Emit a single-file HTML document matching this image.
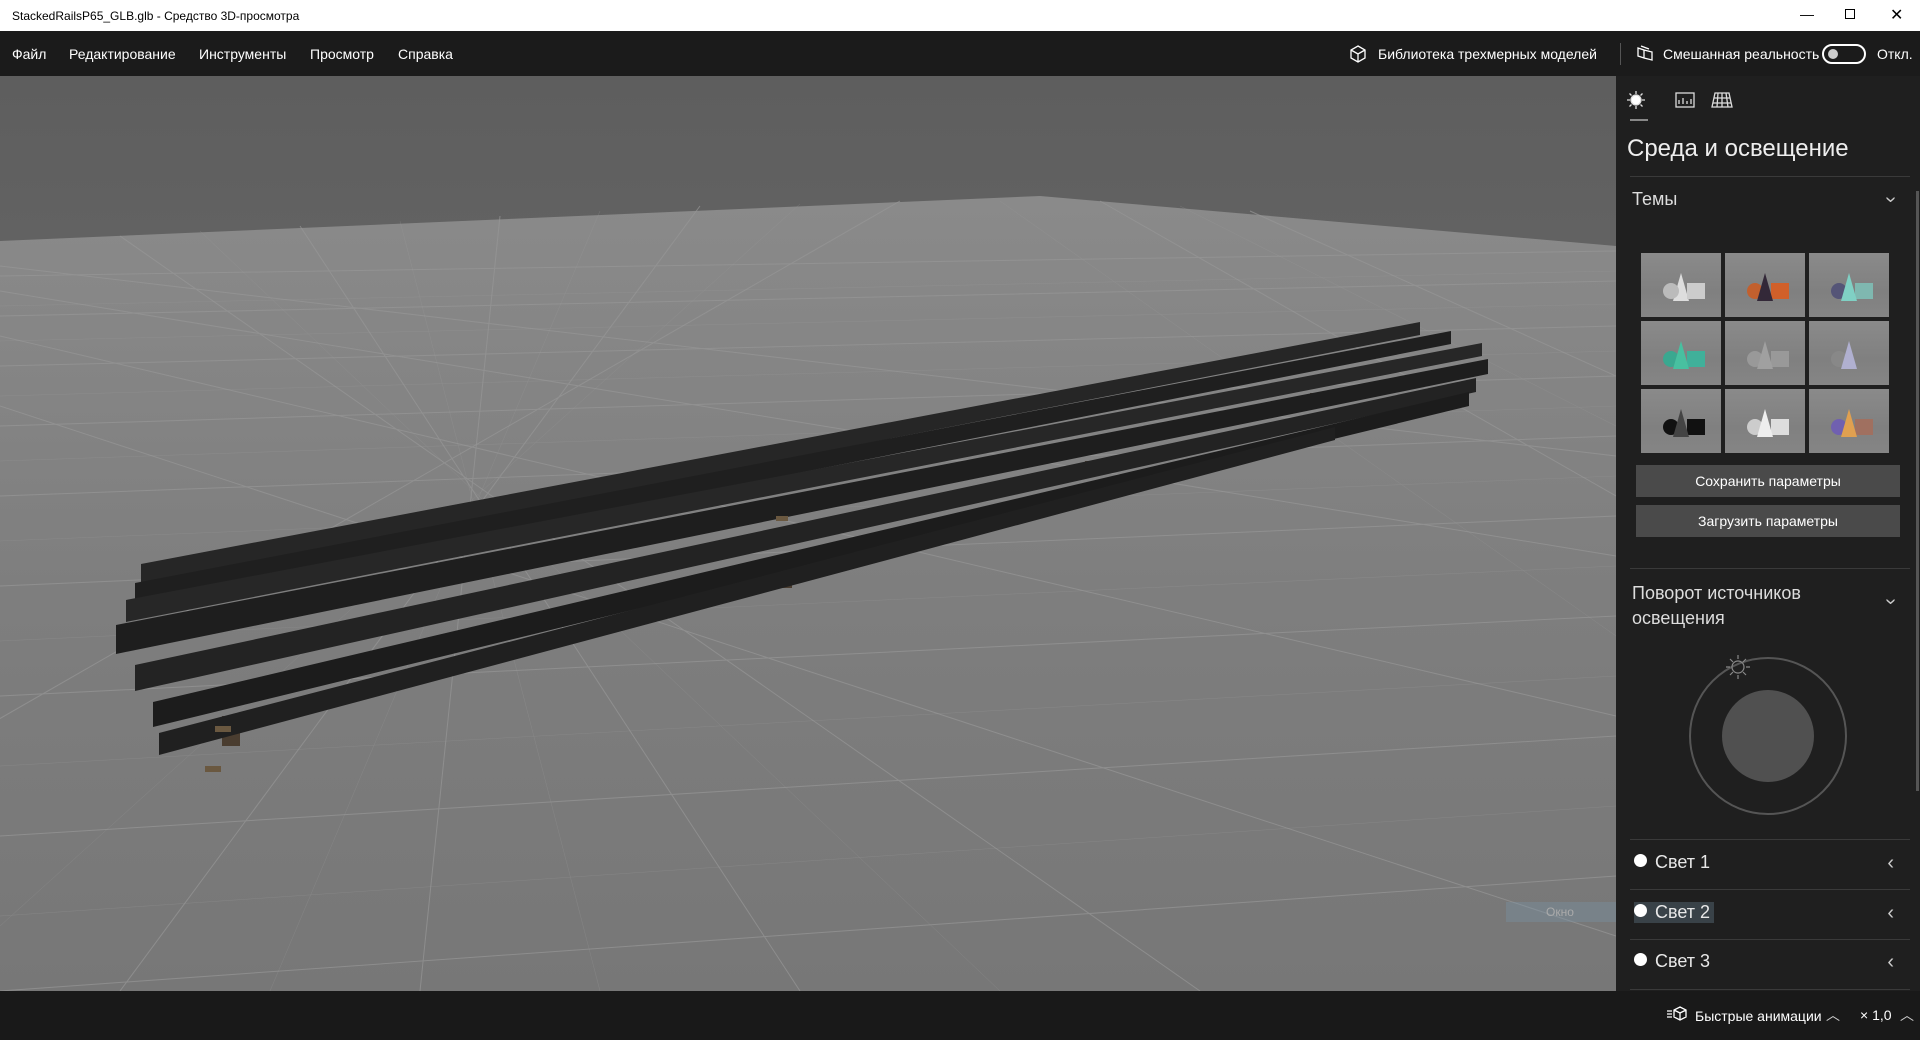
<!DOCTYPE html>
<html><head><meta charset="utf-8"><style>
*{margin:0;padding:0;box-sizing:border-box}
body{width:1920px;height:1040px;overflow:hidden;background:#1f1f1f;font-family:"Liberation Sans","Noto Sans CJK SC",sans-serif;position:relative;color:#fff}
.abs{position:absolute}
#title{left:0;top:0;width:1920px;height:31px;background:#fff;color:#000;font-size:12px}
#menu{left:0;top:31px;width:1920px;height:45px;background:#1b1b1b;font-size:14px}
#view{left:0;top:76px;width:1616px;height:915px;overflow:hidden}
#panel{left:1616px;top:76px;width:304px;height:915px;background:#1f1f1f}
#bottom{left:0;top:991px;width:1920px;height:49px;background:#191919;font-size:14px}
.thumb{position:absolute;width:80px;height:64px;background:linear-gradient(#8a8a8a,#808080 60%,#858585)}
.btn{position:absolute;left:20px;width:264px;height:32px;background:#4a4a4a;font-size:14px;text-align:center;line-height:32px}
.div{position:absolute;left:14px;width:280px;height:1px;background:#3a3a3a}
.row{position:absolute;left:18px;font-size:18px;color:#e8e8e8}
.row i{display:inline-block;width:13px;height:13px;border-radius:50%;background:#fff;margin-right:8px;vertical-align:1px}
.chev{position:absolute;right:26px;color:#ccc;font-size:20px}
</style></head><body>
<div id="title" class="abs"><span class="abs" style="left:12px;top:9px">StackedRailsP65_GLB.glb - Средство 3D-просмотра</span>
<span class="abs" style="left:1800px;top:6px;font-size:14px">—</span>
<span class="abs" style="left:1845px;top:9px;width:10px;height:10px;border:1px solid #000"></span>
<span class="abs" style="left:1890px;top:5px;font-size:16px">✕</span></div>
<div id="menu" class="abs">
<span class="abs" style="left:12px;top:15px">Файл</span>
<span class="abs" style="left:69px;top:15px">Редактирование</span>
<span class="abs" style="left:199px;top:15px">Инструменты</span>
<span class="abs" style="left:310px;top:15px">Просмотр</span>
<span class="abs" style="left:398px;top:15px">Справка</span>
<svg class="abs" style="left:1348px;top:13px" width="20" height="20" viewBox="0 0 20 20" fill="none" stroke="#fff" stroke-width="1.3"><path d="M10 2l7 4v8l-7 4-7-4V6z M3 6l7 4 7-4 M10 10v8"/></svg>
<span class="abs" style="left:1378px;top:15px">Библиотека трехмерных моделей</span>
<div class="abs" style="left:1620px;top:12px;width:1px;height:22px;background:#555"></div>
<svg class="abs" style="left:1635px;top:13px" width="20" height="20" viewBox="0 0 20 20" fill="none" stroke="#fff" stroke-width="1.3"><path d="M3 4l6 2v8l-6-2z M9 6l8 2v8l-8-2 M6 2l8 3"/></svg>
<span class="abs" style="left:1663px;top:15px">Смешанная реальность</span>
<div class="abs" style="left:1822px;top:13px;width:44px;height:20px;border:2px solid #fff;border-radius:10px"><div class="abs" style="left:4px;top:3px;width:10px;height:10px;border-radius:50%;background:#ccc"></div></div>
<span class="abs" style="left:1877px;top:15px">Откл.</span>
</div>
<div id="view" class="abs">
<svg width="1616" height="915" viewBox="0 0 1616 915">
<defs><linearGradient id="sky" x1="0" y1="0" x2="0" y2="1"><stop offset="0" stop-color="#5e5e5e"/><stop offset="1" stop-color="#747474"/></linearGradient>
<linearGradient id="fl" x1="0" y1="0" x2="0" y2="1"><stop offset="0" stop-color="#8a8a8a"/><stop offset="0.5" stop-color="#7e7e7e"/><stop offset="1" stop-color="#777"/></linearGradient></defs>
<rect width="1616" height="915" fill="url(#sky)"/>
<polygon points="0,165 1040,120 1616,170 1616,915 0,915" fill="url(#fl)"/>
<g stroke="#979797" stroke-width="1" opacity="0.7">
<path d="M0,200 L1616,175 M0,240 L1616,205 M0,290 L1616,250 M0,350 L1616,300 M0,420 L1616,360 M0,510 L1616,440 M0,620 L1616,540 M0,760 L1616,660 M0,915 L1616,800"/>
<path d="M0,190 L1616,380 M0,215 L1616,480 M0,260 L1616,640 M0,330 L1616,860 M120,160 L1200,915 M300,150 L800,915 M500,140 L420,915 M700,130 L120,915 M900,125 L-100,700 M1100,125 L1616,420 M1250,135 L1616,300"/>
</g>
<g stroke="#9e9e9e" stroke-width="0.5" opacity="0.35">
<path d="M0,230 L1616,195 M0,265 L1616,228 M0,320 L1616,275 M0,385 L1616,330 M0,465 L1616,400 M0,565 L1616,490 M0,690 L1616,600 M0,840 L1616,730"/>
<path d="M200,155 L1000,915 M400,145 L600,915 M600,135 L270,915 M800,128 L0,850 M1000,125 L1616,560 M1180,130 L1616,350"/>
</g>
<g>
<rect x="222" y="640" width="18" height="30" fill="#4a3d30"/>
<rect x="780" y="500" width="12" height="12" fill="#4a3d30"/>
<rect x="1085" y="385" width="12" height="10" fill="#4a3d30"/>
<rect x="1310" y="317" width="14" height="10" fill="#4a3d30"/>
<polygon points="141,488 1420,246 1420,259 141,509" fill="#262626"/>
<polygon points="135,507 1451,255 1451,268 135,528" fill="#1f1f1f"/>
<polygon points="126,524 1482,267 1482,280 126,546" fill="#272727"/>
<polygon points="116,549 1488,283 1488,298 116,578" fill="#1e1e1e"/>
<polygon points="135,589 1476,302 1476,316 135,615" fill="#232323"/>
<polygon points="153,626 1469,316 1469,330 153,651" fill="#1c1c1c"/>
<polygon points="159,657 1335,351 1335,364 159,679" fill="#202020"/>
<rect x="215" y="650" width="16" height="6" fill="#6a5840"/>
<rect x="205" y="690" width="16" height="6" fill="#6a5840"/>
<rect x="776" y="440" width="12" height="5" fill="#6a5840"/>
</g>
</svg>
<div class="abs" style="left:1506px;top:826px;width:110px;height:20px;background:rgba(120,150,170,0.35);font-size:12px;color:#aaa;padding:3px 0 0 40px">Окно</div>
</div>
<div id="panel" class="abs">
<svg class="abs" style="left:10px;top:14px" width="110" height="20" viewBox="0 0 110 20" fill="none" stroke="#ddd" stroke-width="1.3">
<circle cx="10" cy="10" r="5" fill="#fff"/><path d="M10 1v3M10 16v3M1 10h3M16 10h3M3.5 3.5l2 2M14.5 14.5l2 2M3.5 16.5l2-2M14.5 5.5l2-2"/>
<rect x="50" y="3" width="18" height="14"/><path d="M53 14v-4M57 14v-6M61 14v-3M65 14v-5"/>
<path d="M89 3h14l3 14h-20z M92 3l-1 14 M96 3v14 M100 3l2 14 M88 8h16 M87 13h18"/></svg>
<div class="abs" style="left:14px;top:43px;width:18px;height:2px;background:#888"></div>
<div class="abs" style="left:11px;top:59px;font-size:24px;color:#eee">Среда и освещение</div>
<div class="div" style="top:100px"></div>
<div class="abs" style="left:16px;top:113px;font-size:18px;color:#ddd">Темы</div>
<div class="chev" style="top:112px;transform:rotate(-90deg)">‹</div>
<div class="abs" style="left:300px;top:115px;width:3px;height:600px;background:#555"></div>
<div class="thumb" style="left:25px;top:177px"></div><div class="thumb" style="left:109px;top:177px"></div><div class="thumb" style="left:193px;top:177px"></div>
<div class="thumb" style="left:25px;top:245px"></div><div class="thumb" style="left:109px;top:245px"></div><div class="thumb" style="left:193px;top:245px"></div>
<div class="thumb" style="left:25px;top:313px"></div><div class="thumb" style="left:109px;top:313px"></div><div class="thumb" style="left:193px;top:313px"></div>
<svg class="abs" style="left:25px;top:177px" width="248" height="200">
<g><polygon points="40,20 32,48 48,48" fill="#ddd"/><rect x="46" y="30" width="18" height="16" fill="#ccc"/><circle cx="30" cy="38" r="8" fill="#bbb"/></g>
<g transform="translate(84,0)"><circle cx="30" cy="38" r="8" fill="#c2602e"/><rect x="46" y="30" width="18" height="16" fill="#d0602a"/><polygon points="40,20 32,48 48,48" fill="#332838"/></g>
<g transform="translate(168,0)"><circle cx="30" cy="38" r="8" fill="#557"/><rect x="46" y="30" width="18" height="16" fill="#7fb8b0"/><polygon points="40,20 32,48 48,48" fill="#80d0c4"/></g>
<g transform="translate(0,68)"><circle cx="30" cy="38" r="8" fill="#3aa890"/><rect x="46" y="30" width="18" height="16" fill="#40b09a"/><polygon points="40,20 32,48 48,48" fill="#48c0a0"/></g>
<g transform="translate(84,68)"><circle cx="30" cy="38" r="8" fill="#999"/><rect x="46" y="30" width="18" height="16" fill="#999"/><polygon points="40,20 32,48 48,48" fill="#a0a0a0"/></g>
<g transform="translate(168,68)"><circle cx="30" cy="38" r="8" fill="#888"/><polygon points="40,20 32,48 48,48" fill="#b0b0d0"/></g>
<g transform="translate(0,136)"><circle cx="30" cy="38" r="8" fill="#111"/><rect x="46" y="30" width="18" height="16" fill="#111"/><polygon points="40,20 32,48 48,48" fill="#444"/></g>
<g transform="translate(84,136)"><circle cx="30" cy="38" r="8" fill="#ccc"/><rect x="46" y="30" width="18" height="16" fill="#ddd"/><polygon points="40,20 32,48 48,48" fill="#eee"/></g>
<g transform="translate(168,136)"><circle cx="30" cy="38" r="8" fill="#7060b0"/><rect x="46" y="30" width="18" height="16" fill="#a07060"/><polygon points="40,20 32,48 48,48" fill="#e0a050"/></g>
</svg>
<div class="btn" style="top:389px">Сохранить параметры</div>
<div class="btn" style="top:429px">Загрузить параметры</div>
<div class="div" style="top:492px"></div>
<div class="abs" style="left:16px;top:505px;font-size:18px;line-height:25px;color:#ddd">Поворот источников<br>освещения</div>
<div class="chev" style="top:514px;transform:rotate(-90deg)">‹</div>
<svg class="abs" style="left:70px;top:570px" width="164" height="172" viewBox="0 0 164 172">
<circle cx="82" cy="90" r="78" fill="none" stroke="#555" stroke-width="2"/>
<circle cx="82" cy="90" r="46" fill="#505050"/>
<g stroke="#888" stroke-width="1.2" fill="none"><circle cx="52" cy="21" r="6"/><path d="M52 9v4M52 29v4M40 21h4M60 21h4M44 13l3 3M57 26l3 3M44 29l3-3M57 16l3-3"/></g>
</svg>
<div class="div" style="top:763px"></div>
<div class="row" style="top:776px"><i></i>Свет 1</div><div class="chev" style="top:776px">‹</div>
<div class="div" style="top:813px"></div>
<div class="row" style="top:826px;background:rgba(120,150,170,0.3);padding-right:4px"><i></i>Свет 2</div><div class="chev" style="top:826px">‹</div>
<div class="div" style="top:863px"></div>
<div class="row" style="top:875px"><i></i>Свет 3</div><div class="chev" style="top:875px">‹</div>
<div class="div" style="top:913px"></div>
</div>
<div id="bottom" class="abs">
<svg class="abs" style="left:1666px;top:14px" width="22" height="18" viewBox="0 0 22 18" fill="none" stroke="#fff" stroke-width="1.3"><path d="M1 6h5M1 9h5M1 12h5M14 2l6 3v7l-6 3-6-3V5z M8 5l6 3 6-3 M14 8v7"/></svg>
<span class="abs" style="left:1695px;top:17px">Быстрые анимации</span>
<span class="abs" style="left:1826px;top:14px;color:#ccc">︿</span>
<span class="abs" style="left:1860px;top:16px">× 1,0</span>
<span class="abs" style="left:1900px;top:14px;color:#ccc">︿</span>
</div>
</body></html>
